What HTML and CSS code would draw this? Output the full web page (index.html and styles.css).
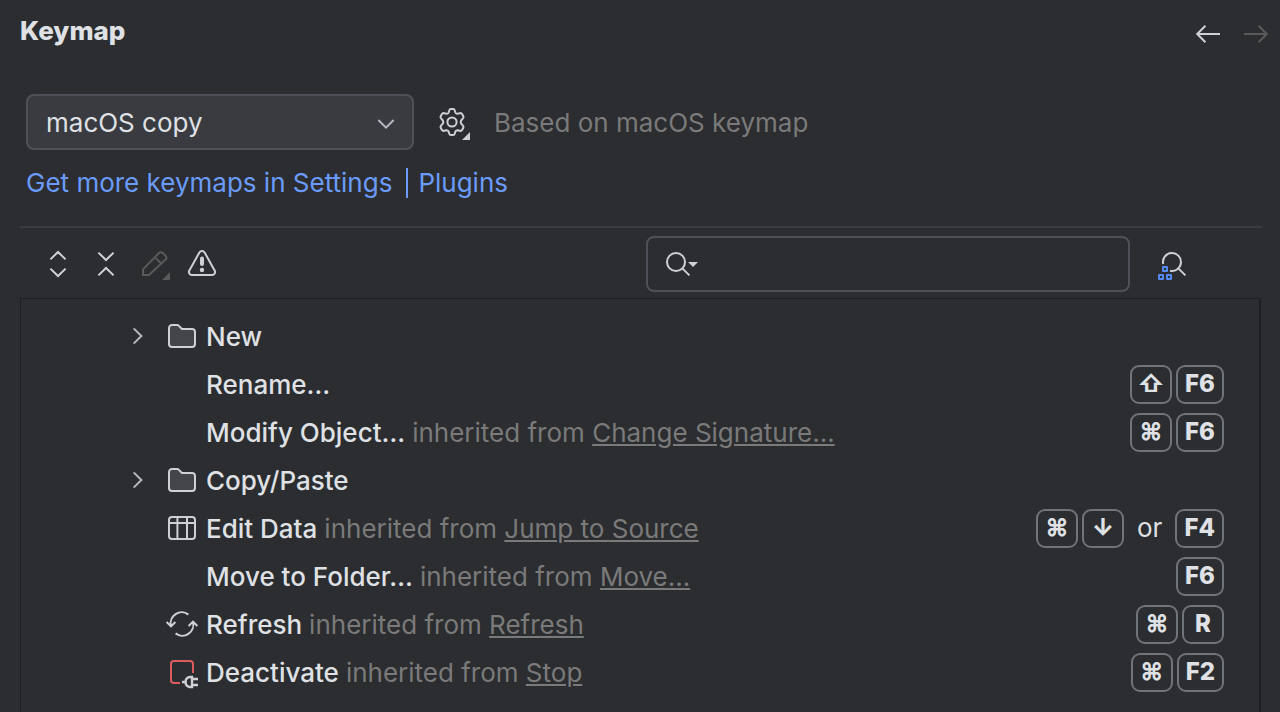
FILE: index.html
```html
<!DOCTYPE html>
<html lang="en">
<head>
    <meta charset="UTF-8">
    <meta name="viewport" content="width=device-width, initial-scale=1.0">
    <title>Keymap</title>
    <link rel="stylesheet" href="styles.css">
</head>
<body>

    <!-- Shared icons -->
    <svg class="sprite" aria-hidden="true">
        <symbol id="chevron" viewBox="0 0 16 16"><path d="M6.300 4.200l3.900 3.800-3.900 3.800"/></symbol>
        <symbol id="folder" viewBox="0 0 16 16"><path class="folder-fill" d="M1.500 4A1.500 1.500 0 0 1 3 2.500h2.600a1 1 0 0 1 .7.3L8 4.500h5A1.500 1.500 0 0 1 14.500 6v6a1.500 1.500 0 0 1-1.500 1.500H3A1.500 1.500 0 0 1 1.500 12z"/></symbol>
    </svg>

    <header class="header">
        <h1>Keymap</h1>
        <div class="nav">
            <button class="icon-btn" aria-label="Back">
                <svg class="icon" viewBox="0 0 16 16"><path d="M14 8H2.700M6.700 3.900L2.600 8l4.100 4.100"/></svg>
            </button>
            <button class="icon-btn" aria-label="Forward" disabled>
                <svg class="icon" viewBox="0 0 16 16"><path d="M2 8h11.300M9.300 3.900L13.400 8l-4.100 4.100"/></svg>
            </button>
        </div>
    </header>

    <main class="content">
        <div class="scheme">
            <div class="select-box">
                <select aria-label="Keymap scheme">
                    <option>macOS copy</option>
                </select>
                <svg class="icon arrow" viewBox="0 0 16 16"><path d="M4.200 6l3.800 3.800L11.800 6"/></svg>
            </div>
            <button class="icon-btn" aria-label="Scheme actions">
                <svg class="icon" viewBox="0 0 16 16">
                    <circle cx="8" cy="8" r="2.300"/>
                    <path d="M6.600 2.300Q6.800 1.500 7.500 1.500h1Q9.200 1.500 9.400 2.300L9.700 3.300Q10 3.900 10.700 3.900L11.900 3.600Q12.700 3.400 13.100 4.100L13.600 5Q14 5.700 13.400 6.300L12.600 7.200Q12.100 8 12.600 8.800L13.400 9.700Q14 10.300 13.600 11L13.100 11.900Q12.700 12.600 11.900 12.400L10.700 12.100Q10 12.100 9.700 12.700L9.400 13.700Q9.200 14.500 8.500 14.500h-1Q6.800 14.500 6.600 13.700L6.300 12.700Q6 12.100 5.300 12.100L4.100 12.400Q3.300 12.600 2.900 11.900L2.400 11Q2 10.300 2.600 9.700L3.400 8.800Q3.900 8 3.400 7.200L2.600 6.300Q2 5.700 2.400 5L2.900 4.100Q3.300 3.400 4.100 3.600L5.300 3.900Q6 3.900 6.300 3.300z"/>
                    <path class="solid" d="M17 13v4h-4z"/>
                </svg>
            </button>
            <span class="based-on">Based on macOS keymap</span>
        </div>
        <p class="more">
            <a href="#">Get more keymaps in Settings</a><span class="bar"></span><a href="#">Plugins</a>
        </p>

        <div class="toolbar">
            <button class="icon-btn" aria-label="Expand all">
                <svg class="icon" viewBox="0 0 16 16"><path d="M4.200 5.700L8 2l3.800 3.700M4.200 10.300L8 14l3.800-3.700"/></svg>
            </button>
            <button class="icon-btn" aria-label="Collapse all">
                <svg class="icon" viewBox="0 0 16 16"><path d="M4.200 2.300L8 6l3.800-3.700M4.200 13.700L8 10l3.800 3.700"/></svg>
            </button>
            <button class="icon-btn" aria-label="Edit shortcut" disabled>
                <svg class="icon" viewBox="0 0 16 16">
                    <path d="M2.500 13.500v-2.800L10.500 2.500a1.300 1.300 0 0 1 1.900 0l1.400 1.400a1.300 1.300 0 0 1 0 1.900L5.500 13.500zM8.500 4.700L11.700 7.900"/>
                    <path class="solid" d="M16 12v4h-4z"/>
                </svg>
            </button>
            <button class="icon-btn" aria-label="Show conflicts">
                <svg class="icon" viewBox="0 0 16 16">
                    <path d="M6.700 2.200a1.500 1.500 0 0 1 2.600 0l5 9a1.500 1.500 0 0 1-1.300 2.300H3a1.500 1.500 0 0 1-1.300-2.300z"/>
                    <path class="thick" d="M8 5.300v2.700"/>
                    <circle class="solid" cx="8" cy="11" r="1.100"/>
                </svg>
            </button>
            <div class="search">
                <svg class="icon" viewBox="0 0 16 16">
                    <circle cx="7" cy="7" r="4.500"/><path d="M10.300 10.300l3.400 3.400"/>
                    <path class="solid" d="M13 7h5l-2.500 2.500z"/>
                </svg>
                <input type="text" aria-label="Search actions">
            </div>
            <button class="icon-btn" aria-label="Find by shortcut">
                <svg class="icon" viewBox="0 0 16 16">
                    <path d="M3.600 8A4.500 4.500 0 1 1 7 11.400M11.300 10.300l3.400 3.400"/>
                    <path class="dots" d="M3.500 9.500h2v2h-2zM1.500 13.500h2v2h-2zM5.500 13.500h2v2h-2z"/>
                </svg>
            </button>
        </div>

        <ul class="tree">
            <li>
                <svg class="icon arrow"><use href="#chevron"/></svg>
                <svg class="icon"><use href="#folder"/></svg>
                <span class="name">New</span>
            </li>
            <li>
                <span class="name indent">Rename…</span>
                <span class="keys"><kbd class="symbol">⇧</kbd><kbd>F6</kbd></span>
            </li>
            <li>
                <span class="name indent">Modify Object…</span>
                <span class="from">inherited from <a href="#">Change Signature…</a></span>
                <span class="keys"><kbd class="symbol">⌘</kbd><kbd>F6</kbd></span>
            </li>
            <li>
                <svg class="icon arrow"><use href="#chevron"/></svg>
                <svg class="icon"><use href="#folder"/></svg>
                <span class="name">Copy/Paste</span>
            </li>
            <li>
                <svg class="icon first" viewBox="0 0 16 16">
                    <rect x="1.500" y="2.500" width="13" height="11" rx="1.500"/>
                    <path d="M1.500 5.500h13M5.700 2.500v11M10.500 2.500v11"/>
                </svg>
                <span class="name">Edit Data</span>
                <span class="from">inherited from <a href="#">Jump to Source</a></span>
                <span class="keys"><kbd class="symbol">⌘</kbd><kbd class="symbol">↓</kbd><span class="or">or</span><kbd>F4</kbd></span>
            </li>
            <li>
                <span class="name indent">Move to Folder…</span>
                <span class="from">inherited from <a href="#">Move…</a></span>
                <span class="keys"><kbd>F6</kbd></span>
            </li>
            <li>
                <svg class="icon first" viewBox="0 0 16 16">
                    <path d="M11.200 3.300A5.500 5.500 0 0 0 2.500 9M.300 7l2.200 2.200L4.700 7M4.800 12.700A5.500 5.500 0 0 0 13.500 7M11.300 9l2.200-2.200L15.700 9"/>
                </svg>
                <span class="name">Refresh</span>
                <span class="from">inherited from <a href="#">Refresh</a></span>
                <span class="keys"><kbd class="symbol">⌘</kbd><kbd>R</kbd></span>
            </li>
            <li>
                <svg class="icon first" viewBox="0 0 16 16">
                    <path class="stop" d="M7 13.500H4A1.500 1.500 0 0 1 2.500 12V4A1.500 1.500 0 0 1 4 2.500h8A1.500 1.500 0 0 1 13.500 4v4.500"/>
                    <path class="plug" d="M8 13h1.800M13 10.500h-1a2.200 2.200 0 0 0-2.200 2.200v.600a2.200 2.200 0 0 0 2.200 2.200h1zM13 11.500h3M13 14.500h3"/>
                </svg>
                <span class="name">Deactivate</span>
                <span class="from">inherited from <a href="#">Stop</a></span>
                <span class="keys"><kbd class="symbol">⌘</kbd><kbd>F2</kbd></span>
            </li>
        </ul>
    </main>

</body>
</html>
```
FILE: styles.css
```css
* {
    box-sizing: border-box;
}

body {
    display: flex;
    flex-direction: column;
    min-height: 100vh;
    margin: 0;
    background-color: #2b2d30;
    color: #dfe1e5;
    font-family: Inter, sans-serif;
    font-size: 26px;
    line-height: 32px;
}

button, input, select {
    font: inherit;
    color: inherit;
}

a {
    color: #6b9bfa;
    text-decoration: none;
}

/* Icons */
.sprite {
    position: absolute;
    width: 0;
    height: 0;
}

.icon {
    display: block;
    flex: none;
    width: 32px;
    height: 32px;
    overflow: visible;
    fill: none;
    stroke: #ced0d6;
}

.icon .solid {
    fill: #ced0d6;
    stroke: none;
}

.icon .thick {
    stroke-width: 2;
    stroke-linecap: round;
}

.icon .dots {
    stroke: #548af7;
    stroke-linejoin: round;
}

.icon .stop {
    stroke: #db5c5c;
}

.icon .plug {
    stroke-width: 1.2;
}

.arrow {
    stroke: #b4b8bf;
}

.folder-fill {
    fill: #43454a;
}

.icon-btn {
    flex: none;
    padding: 0;
    border: none;
    background: none;
    cursor: pointer;
}

.icon-btn:disabled .icon {
    stroke: #5a5a5a;
}

.icon-btn:disabled .solid {
    fill: #5a5a5a;
}

/* Header */
.header {
    display: flex;
    justify-content: space-between;
    padding: 15px 8px 0 20px;
}

h1 {
    margin: 0;
    font-size: 26px;
    font-weight: 800;
}

.nav {
    display: flex;
    gap: 16px;
    padding-top: 3px;
}

.content {
    display: flex;
    flex: 1;
    flex-direction: column;
    padding: 44px 18px 0 20px;
}

/* Scheme row */
.scheme {
    display: flex;
    align-items: center;
    padding-left: 6px;
}

.select-box {
    position: relative;
    width: 388px;
    margin-right: 22px;
}

.select-box select {
    width: 100%;
    height: 56px;
    padding: 2px 18px 0;
    border: 2px solid #4e5157;
    border-radius: 8px;
    background-color: #393b40;
    appearance: none;
}

.select-box .icon {
    position: absolute;
    top: 14px;
    right: 12px;
    pointer-events: none;
}

.based-on {
    margin-left: 26px;
    padding-top: 2px;
    color: #7a7a7a;
}

.more {
    display: flex;
    align-items: center;
    margin: 0;
    padding: 17px 6px 27px;
    border-bottom: 2px solid #393b40;
}

.more .bar {
    width: 2px;
    height: 30px;
    margin: 0 10px 0 14px;
    background-color: #6b9bfa;
}

/* Toolbar */
.toolbar {
    display: flex;
    align-items: center;
    gap: 16px;
    padding: 8px 74px 6px 22px;
}

.search {
    display: flex;
    align-items: center;
    width: 484px;
    height: 56px;
    margin: 0 10px 0 auto;
    padding: 0 14px;
    border: 2px solid #4e5157;
    border-radius: 8px;
}

.search input {
    flex: 1;
    min-width: 0;
    margin-left: 12px;
    border: none;
    outline: none;
    background: none;
}

/* Actions tree */
.tree {
    flex: 1;
    margin: 0 1px 0 0;
    padding: 13px 35px 0 100px;
    border: solid #1e1f22;
    border-width: 1px 2px 0 1px;
    list-style: none;
}

.tree li {
    display: flex;
    align-items: center;
    height: 48px;
}

.tree .icon {
    margin-right: 8px;
}

.tree .arrow {
    margin-right: 13px;
}

.tree .first {
    margin-left: 45px;
}

.name, .from {
    padding-top: 2px;
}

.name {
    margin-right: 7px;
    font-weight: 500;
}

.indent {
    margin-left: 85px;
}

.from, .from a {
    color: #7a7a7a;
}

.from a {
    text-decoration: underline;
}

.keys {
    display: flex;
    align-items: center;
    gap: 4px;
    margin-left: auto;
}

kbd {
    min-width: 42px;
    height: 39px;
    padding: 0 7px;
    border: 2px solid #6f737a;
    border-radius: 9px;
    font-family: Inter, sans-serif;
    font-size: 24px;
    font-weight: 800;
    line-height: 34px;
    text-align: center;
}

kbd.symbol {
    padding: 0;
}

.or {
    margin: 0 9px;
}
```
